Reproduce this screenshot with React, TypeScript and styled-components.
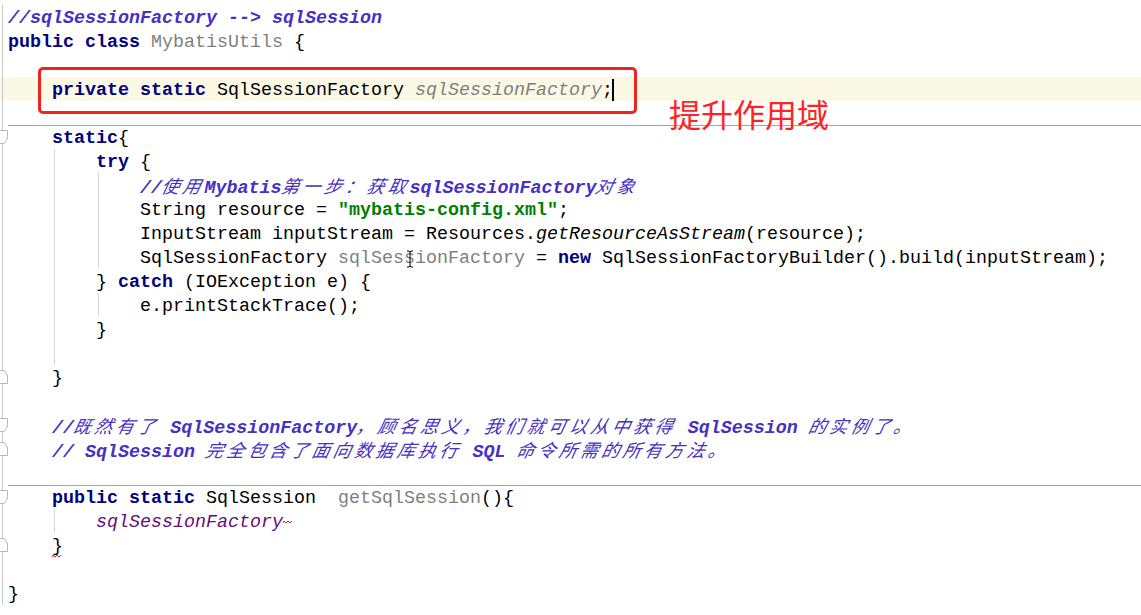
import React from "react";
import styled, { createGlobalStyle, css } from "styled-components";

const GlobalStyle = createGlobalStyle`
  html, body {
    margin: 0;
    padding: 0;
    background: #ffffff;
  }
`;

const CHAR = 11;

const Editor = styled.div`
  position: relative;
  width: 1141px;
  height: 615px;
  overflow: hidden;
  padding-top: 5px;
  box-sizing: border-box;
  background: #ffffff;
  font-family: "Liberation Mono", "Noto Sans CJK SC", monospace;
  font-size: 18.33px;
  color: #000000;
`;

const Row = styled.div<{ $current?: boolean }>`
  display: flex;
  height: 24px;
  background: ${(p) => (p.$current ? "#fcf8e6" : "transparent")};
`;

const Gutter = styled.div`
  width: 8px;
  flex: none;
  display: flex;
  align-items: center;
  background: linear-gradient(#c8c8c8, #c8c8c8) no-repeat 2px 0 / 1px 100%;
`;

const guideBg = (cols: number[]) =>
  cols
    .map(
      (c) =>
        `linear-gradient(#d6d6d6, #d6d6d6) no-repeat ${c * CHAR + 2}px 0 / 1px 100%`
    )
    .join(", ");

const Code = styled.div<{ $separator?: boolean; $guides?: number[] }>`
  flex: 1;
  height: 24px;
  line-height: 28px;
  white-space: pre;
  ${(p) =>
    p.$guides &&
    p.$guides.length > 0 &&
    css`
      background: ${guideBg(p.$guides)};
    `}
  ${(p) =>
    p.$separator &&
    css`
      box-shadow: inset 0 1px 0 #a3a3a3;
    `}
`;

const Kw = styled.span`
  color: #000080;
  font-weight: bold;
`;

const Str = styled.span`
  color: #008000;
  font-weight: bold;
`;

const Unused = styled.span<{ $italic?: boolean }>`
  color: #7f7f7f;
  font-style: ${(p) => (p.$italic ? "italic" : "normal")};
`;

const Field = styled.span`
  color: #660e7a;
  font-style: italic;
`;

const Call = styled.span`
  font-style: italic;
`;

const CommentText = styled.span`
  color: #4630c6;
  font-style: italic;
  font-weight: bold;
`;

const Cjk = styled.span`
  display: inline-block;
  font-family: "Noto Sans CJK SC", sans-serif;
  font-weight: normal;
  font-size: 18px;
  line-height: 24px;
  letter-spacing: 3.3px;
  transform: skewX(-12deg);
`;

const Caret = styled.span`
  display: inline-block;
  width: 2px;
  height: 22px;
  margin-left: -1px;
  vertical-align: middle;
  background: #000000;
`;

const Squiggly = styled.span`
  position: relative;
  display: inline-block;
  min-width: 11px;
  svg {
    position: absolute;
    left: 0;
    bottom: 3px;
  }
`;

const RedBox = styled.div`
  position: absolute;
  left: 38px;
  top: 67px;
  width: 599px;
  height: 47px;
  box-sizing: border-box;
  border: 3px solid #f0231f;
  border-radius: 5px;
`;

const Note = styled.div`
  position: absolute;
  left: 669px;
  top: 93px;
  font-family: "Noto Sans CJK SC", sans-serif;
  font-size: 32px;
  line-height: 40px;
  color: #ff2323;
`;

const Pointer = styled.svg`
  position: absolute;
  left: 406px;
  top: 250px;
`;

const CJK_RE = /([\u3000-\u303f\u4e00-\u9fff\uff00-\uffef]+)/;

const splitCjk = (text: string) =>
  text
    .split(CJK_RE)
    .filter(Boolean)
    .map((part, i) =>
      /[\u3000-\u303f\u4e00-\u9fff\uff00-\uffef]/.test(part) ? (
        <Cjk key={i}>{part}</Cjk>
      ) : (
        part
      )
    );

const Cm = ({ children }: { children: string }) => (
  <CommentText>{splitCjk(children)}</CommentText>
);

const Wave = ({ width }: { width: number }) => (
  <svg width={width} height="4" viewBox={`0 0 ${width} 4`}>
    <path
      d={`M0 3 ${Array.from({ length: Math.ceil(width / 2) })
        .map((_, i) => `L${i * 2 + 1} ${i % 2 ? 3 : 1}`)
        .join(" ")}`}
      fill="none"
      stroke="#e02020"
      strokeWidth="1"
    />
  </svg>
);

const Fold = ({ end }: { end?: boolean }) => (
  <svg width="8" height="14" viewBox="0 0 8 14">
    <path
      d={end ? "M0 13.5 H7.5 V5 L4 0.5 H0" : "M0 0.5 H7.5 V9 L4 13.5 H0"}
      fill="#ffffff"
      stroke="#b9b9b9"
      strokeWidth="1"
    />
  </svg>
);

type LineProps = {
  children?: React.ReactNode;
  current?: boolean;
  separator?: boolean;
  guides?: number[];
  fold?: "start" | "end";
};

const Line = ({ children, current, separator, guides, fold }: LineProps) => (
  <Row $current={current}>
    <Gutter>{fold && <Fold end={fold === "end"} />}</Gutter>
    <Code $separator={separator} $guides={guides}>
      {children ?? " "}
    </Code>
  </Row>
);

export default function App() {
  return (
    <>
      <GlobalStyle />
      <Editor>
        <Line>
          <Cm>//sqlSessionFactory --&gt; sqlSession</Cm>
        </Line>
        <Line>
          <Kw>public</Kw> <Kw>class</Kw> <Unused>MybatisUtils</Unused> {"{"}
        </Line>
        <Line />
        <Line current>
          {"    "}
          <Kw>private</Kw> <Kw>static</Kw> SqlSessionFactory{" "}
          <Unused $italic>sqlSessionFactory</Unused>;<Caret />
        </Line>
        <Line />
        <Line separator fold="start">
          {"    "}
          <Kw>static</Kw>
          {"{"}
        </Line>
        <Line guides={[4]}>
          {"        "}
          <Kw>try</Kw> {"{"}
        </Line>
        <Line guides={[4, 8]}>
          {"            "}
          <Cm>//使用Mybatis第一步：获取sqlSessionFactory对象</Cm>
        </Line>
        <Line guides={[4, 8]}>
          {"            String resource = "}
          <Str>"mybatis-config.xml"</Str>;
        </Line>
        <Line guides={[4, 8]}>
          {"            InputStream inputStream = Resources."}
          <Call>getResourceAsStream</Call>(resource);
        </Line>
        <Line guides={[4, 8]}>
          {"            SqlSessionFactory "}
          <Unused>sqlSessionFactory</Unused> = <Kw>new</Kw>{" "}
          SqlSessionFactoryBuilder().build(inputStream);
        </Line>
        <Line guides={[4]}>
          {"        } "}
          <Kw>catch</Kw> (IOException e) {"{"}
        </Line>
        <Line guides={[4, 8]}>{"            e.printStackTrace();"}</Line>
        <Line guides={[4]}>{"        }"}</Line>
        <Line guides={[4]} />
        <Line fold="end">{"    }"}</Line>
        <Line />
        <Line fold="start">
          {"    "}
          <Cm>//既然有了 SqlSessionFactory，顾名思义，我们就可以从中获得 SqlSession 的实例了。</Cm>
        </Line>
        <Line fold="end">
          {"    "}
          <Cm>// SqlSession 完全包含了面向数据库执行 SQL 命令所需的所有方法。</Cm>
        </Line>
        <Line />
        <Line separator fold="start">
          {"    "}
          <Kw>public</Kw> <Kw>static</Kw> SqlSession{"  "}
          <Unused>getSqlSession</Unused>(){"{"}
        </Line>
        <Line guides={[4]}>
          {"        "}
          <Field>sqlSessionFactory</Field>
          <Squiggly>
            <Wave width={10} />
          </Squiggly>
        </Line>
        <Line fold="end">
          {"    "}
          <Squiggly>
            {"}"}
            <Wave width={10} />
          </Squiggly>
        </Line>
        <Line />
        <Line>{"}"}</Line>

        <RedBox />
        <Note>提升作用域</Note>
        <Pointer width="8" height="18" viewBox="0 0 8 18">
          <path
            d="M1 1 H3 L4 2 L5 1 H7 M4 2 V16 M1 17 H3 L4 16 L5 17 H7"
            fill="none"
            stroke="#000000"
            strokeWidth="1"
          />
        </Pointer>
      </Editor>
    </>
  );
}
